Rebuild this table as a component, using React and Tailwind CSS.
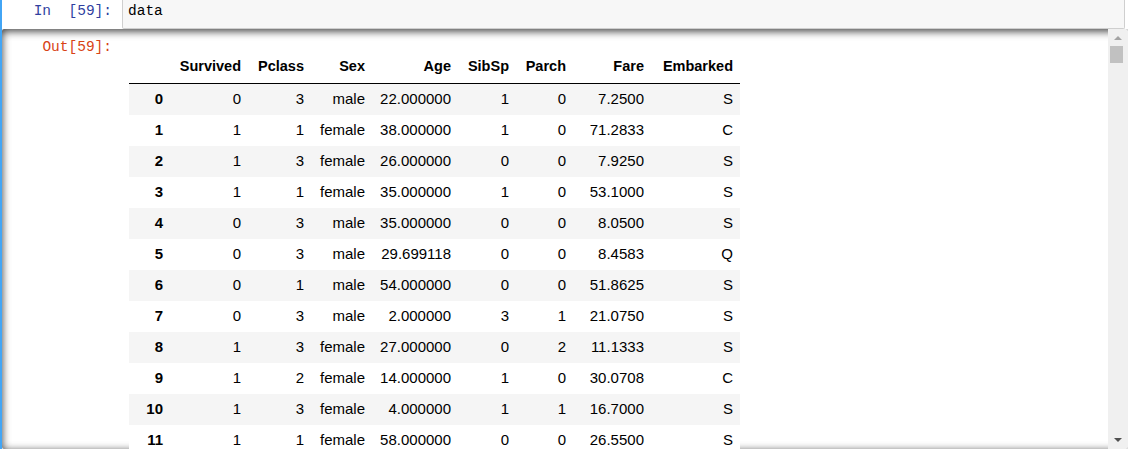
const rows = [
  ["0", "0", "3", "male", "22.000000", "1", "0", "7.2500", "S"],
  ["1", "1", "1", "female", "38.000000", "1", "0", "71.2833", "C"],
  ["2", "1", "3", "female", "26.000000", "0", "0", "7.9250", "S"],
  ["3", "1", "1", "female", "35.000000", "1", "0", "53.1000", "S"],
  ["4", "0", "3", "male", "35.000000", "0", "0", "8.0500", "S"],
  ["5", "0", "3", "male", "29.699118", "0", "0", "8.4583", "Q"],
  ["6", "0", "1", "male", "54.000000", "0", "0", "51.8625", "S"],
  ["7", "0", "3", "male", "2.000000", "3", "1", "21.0750", "S"],
  ["8", "1", "3", "female", "27.000000", "0", "2", "11.1333", "S"],
  ["9", "1", "2", "female", "14.000000", "1", "0", "30.0708", "C"],
  ["10", "1", "3", "female", "4.000000", "1", "1", "16.7000", "S"],
  ["11", "1", "1", "female", "58.000000", "0", "0", "26.5500", "S"],
];

const headers = ["", "Survived", "Pclass", "Sex", "Age", "SibSp", "Parch", "Fare", "Embarked"];

const cols = "grid grid-cols-[41px_78px_63px_61px_86px_58px_57px_78px_89px]";
const mono = { fontFamily: '"Liberation Mono", "DejaVu Sans Mono", monospace' };

function DataFrame() {
  return (
    <div className="mt-[23px] ml-[17px] text-[15px] text-black" style={{ fontFamily: '"Liberation Sans", Arial, sans-serif' }}>
      <div className={`${cols} h-[32px] items-center border-b border-black pb-[2px] font-bold text-[14.5px]`}>
        {headers.map((h, i) => (
          <div key={i} className="pr-[7px] text-right">{h}</div>
        ))}
      </div>
      {rows.map((r, ri) => (
        <div key={ri} className={`${cols} h-[31px] items-center ${ri % 2 === 0 ? "bg-[#f5f5f5]" : "bg-white"}`}>
          {r.map((c, ci) => (
            <div key={ci} className={`pr-[7px] text-right ${ci === 0 ? "font-bold" : ""}`}>{c}</div>
          ))}
        </div>
      ))}
    </div>
  );
}

function Scrollbar() {
  return (
    <div className="flex w-[20px] flex-col bg-[#f0f0f0]">
      <svg className="mx-auto mt-[7px]" width="8" height="4" viewBox="0 0 8 4">
        <path d="M0 4 L4 0 L8 4 Z" fill="#a3a3a3" />
      </svg>
      <div className="mt-[6px] ml-[2px] h-[17px] w-[13px] bg-[#c1c1c1]" />
      <svg className="mx-auto mt-auto mb-[7px]" width="8" height="4" viewBox="0 0 8 4">
        <path d="M0 0 L8 0 L4 4 Z" fill="#505050" />
      </svg>
    </div>
  );
}

export default function App() {
  return (
    <div className="flex h-[449px] w-[1128px] overflow-hidden bg-white">
      <div className="w-[2px] shrink-0 bg-[#42a5f5]" />
      <div className="flex min-w-0 flex-1 flex-col">
        <div className="flex h-[29px] shrink-0">
          <div className="w-[110px] shrink-0 text-right text-[14.5px] leading-[22px] text-[#303f9f]" style={mono}>
            In&nbsp;&nbsp;[59]:
          </div>
          <div className="ml-[10px] mr-[3px] flex-1 rounded-b-[2px] border border-t-0 border-[#cfcfcf] bg-[#f7f7f7] pl-[5px] text-[14.5px] leading-[22px] text-black" style={mono}>
            data
          </div>
        </div>
        <div className="flex h-[420px] shrink-0 overflow-hidden rounded-[2px] shadow-[inset_0_2px_8px_rgba(0,0,0,0.8)]">
          <div className="flex min-w-0 flex-1 items-start">
            <div className="mt-[8px] w-[110px] shrink-0 text-right text-[14.5px] leading-[20px] text-[#d84315]" style={mono}>
              Out[59]:
            </div>
            <DataFrame />
          </div>
          <Scrollbar />
        </div>
      </div>
    </div>
  );
}
